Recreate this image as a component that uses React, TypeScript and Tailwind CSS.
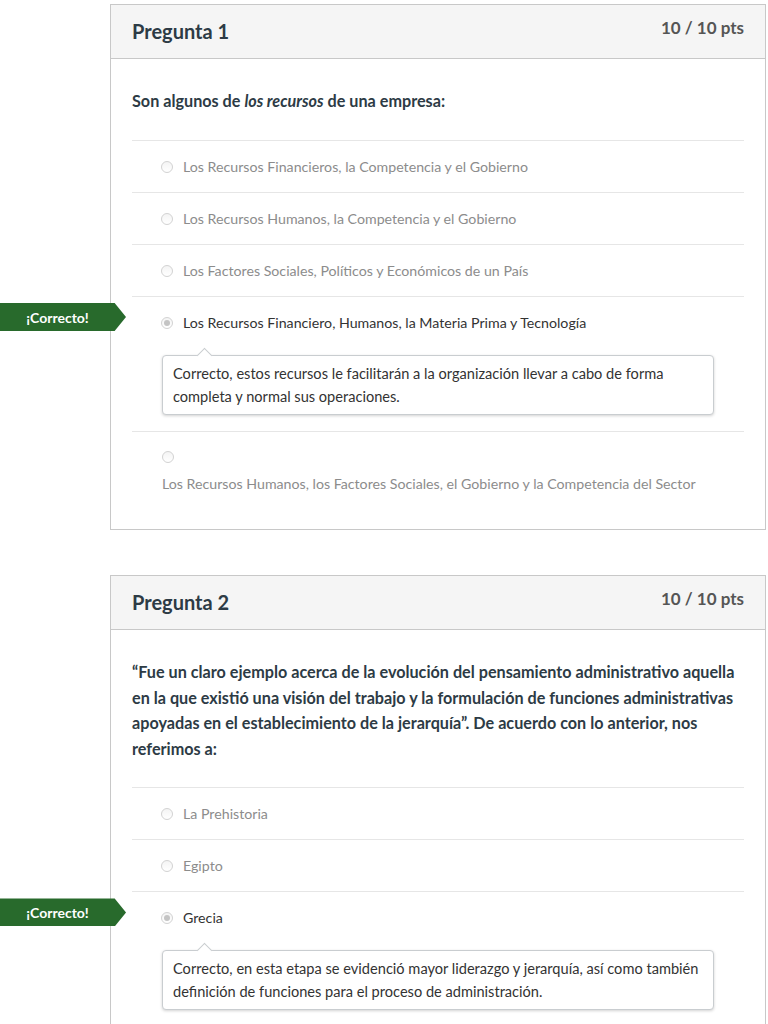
import React from "react";

function Radio({ checked = false }: { checked?: boolean }) {
  return (
    <span className="relative flex h-[12px] w-[12px] shrink-0 items-center justify-center rounded-full border border-[#d2d2d2] bg-gradient-to-b from-[#f4f4f4] to-white">
      {checked && <span className="h-[6px] w-[6px] rounded-full bg-[#c4c4c4]" />}
    </span>
  );
}

function Badge() {
  return (
    <div className="absolute left-[-132px] top-[6px] flex h-[28px] w-[126px] items-center bg-[#286a2c] [clip-path:polygon(0_0,91%_0,100%_50%,91%_100%,0_100%)]">
      <span className="w-[115px] text-center text-[14px] font-bold text-white">¡Correcto!</span>
    </div>
  );
}

function Comment({ children }: { children: React.ReactNode }) {
  return (
    <div className="relative ml-[30px] w-[552px] rounded-[4px] border border-[#c9cdd0] bg-white px-[10px] py-[6px] text-[14.6px] leading-[23px] text-[#333] shadow-[0_1px_3px_rgba(0,0,0,0.18)]">
      <span className="absolute left-[36px] top-[-6px] h-[11px] w-[11px] rotate-45 border-l border-t border-[#c9cdd0] bg-white" />
      <p className="relative">{children}</p>
    </div>
  );
}

function Row({
  text,
  correct = false,
  comment,
}: {
  text: string;
  correct?: boolean;
  comment?: React.ReactNode;
}) {
  return (
    <div className={`relative border-t border-[#e6e6e6] ${comment ? "pb-[16px]" : ""}`}>
      {correct && <Badge />}
      <div className="flex h-[51px] items-center gap-[10px] pl-[29px]">
        <Radio checked={correct} />
        <span className={`text-[14.2px] ${correct ? "text-[#333]" : "text-[#8c8c8c]"}`}>{text}</span>
      </div>
      {comment && <div className="mt-[7px]"><Comment>{comment}</Comment></div>}
    </div>
  );
}

function Header({ n }: { n: number }) {
  return (
    <div className="flex h-[54px] items-start justify-between border-b border-[#c8c8c8] bg-[#f5f5f5] px-[21px]">
      <h2 className="pt-[13px] text-[20px] font-bold leading-[26px] text-[#2d3b45]">Pregunta {n}</h2>
      <span className="pt-[12px] text-[17px] font-bold leading-[22px] text-[#555]">10 / 10 pts</span>
    </div>
  );
}

export default function App() {
  return (
    <div className="min-h-[1024px] bg-white pt-[4px] pb-[40px] font-['Lato',sans-serif]">
      {/* Question 1 */}
      <div className="relative ml-[110px] w-[656px] border border-[#c8c8c8] bg-white">
        <Header n={1} />
        <div className="px-[21px] pt-[30px] pb-[33px]">
          <p className="mb-[27px] text-[16.2px] font-bold leading-[24px] text-[#2d3b45]">
            Son algunos de <em className="italic">los recursos</em> de una empresa:
          </p>
          <Row text="Los Recursos Financieros, la Competencia y el Gobierno" />
          <Row text="Los Recursos Humanos, la Competencia y el Gobierno" />
          <Row text="Los Factores Sociales, Políticos y Económicos de un País" />
          <Row
            text="Los Recursos Financiero, Humanos, la Materia Prima y Tecnología"
            correct
            comment={
              <>
                Correcto, estos recursos le facilitarán a la organización llevar a cabo de forma
                <br />
                completa y normal sus operaciones.
              </>
            }
          />
          <div className="border-t border-[#e6e6e6] pt-[19px] pl-[30px]">
            <Radio />
            <p className="mt-[9px] text-[14.2px] leading-[24px] text-[#8c8c8c]">
              Los Recursos Humanos, los Factores Sociales, el Gobierno y la Competencia del Sector
            </p>
          </div>
        </div>
      </div>

      {/* Question 2 */}
      <div className="relative mt-[45px] ml-[110px] w-[656px] border border-[#c8c8c8] bg-white">
        <Header n={2} />
        <div className="px-[21px] pt-[29px] pb-[30px]">
          <p className="mb-[26px] text-[16.2px] font-bold leading-[25.6px] text-[#2d3b45]">
            “Fue un claro ejemplo acerca de la evolución del pensamiento administrativo aquella
            <br />
            en la que existió una visión del trabajo y la formulación de funciones administrativas
            <br />
            apoyadas en el establecimiento de la jerarquía”. De acuerdo con lo anterior, nos
            <br />
            referimos a:
          </p>
          <Row text="La Prehistoria" />
          <Row text="Egipto" />
          <Row
            text="Grecia"
            correct
            comment={
              <>
                Correcto, en esta etapa se evidenció mayor liderazgo y jerarquía, así como también
                <br />
                definición de funciones para el proceso de administración.
              </>
            }
          />
        </div>
      </div>
    </div>
  );
}
